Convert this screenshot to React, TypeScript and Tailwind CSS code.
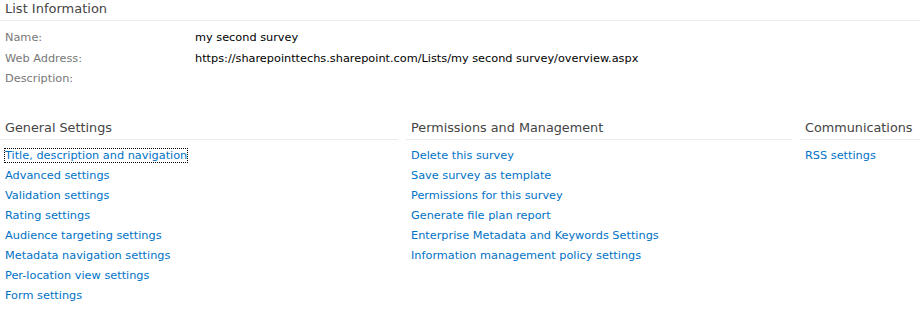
const general = [
  'Title, description and navigation',
  'Advanced settings',
  'Validation settings',
  'Rating settings',
  'Audience targeting settings',
  'Metadata navigation settings',
  'Per-location view settings',
  'Form settings',
];

const permissions = [
  'Delete this survey',
  'Save survey as template',
  'Permissions for this survey',
  'Generate file plan report',
  'Enterprise Metadata and Keywords Settings',
  'Information management policy settings',
];

const communications = ['RSS settings'];

const info = [
  { label: 'Name:', value: 'my second survey' },
  { label: 'Web Address:', value: 'https://sharepointtechs.sharepoint.com/Lists/my second survey/overview.aspx' },
  { label: 'Description:', value: '' },
];

function Section({ title, links, className }: { title: string; links: string[]; className?: string }) {
  return (
    <div className={className}>
      <div className="border-b border-[#ebebeb] px-[5px] pb-[2px] text-[12.8px] leading-[18px] text-[#444]">{title}</div>
      <ul className="pt-[6px]">
        {links.map((l, i) => (
          <li key={l} className="h-[20px] px-[5px] leading-[20px]">
            <a
              href="#"
              className={
                i === 0 && title === 'General Settings'
                  ? 'text-[#0072c6] outline-1 outline-dotted outline-[#000]'
                  : 'text-[#0072c6]'
              }
            >
              {l}
            </a>
          </li>
        ))}
      </ul>
    </div>
  );
}

export default function App() {
  return (
    <div className="h-[326px] w-[920px] overflow-hidden bg-white text-[11.3px] font-['DejaVu_Sans',Verdana,sans-serif]">
      <div className="border-b border-[#ebebeb] px-[5px] pt-px pb-[3px] text-[13px] leading-[16px] text-[#444]">
        List Information
      </div>
      <div className="pt-[7px]">
        {info.map((r) => (
          <div key={r.label} className="flex h-[20.5px] leading-[20px]">
            <div className="w-[195px] pl-[5px] text-[#777]">{r.label}</div>
            <div className="text-[#000]">{r.value}</div>
          </div>
        ))}
      </div>
      <div className="mt-[29px] flex gap-[8px]">
        <Section title="General Settings" links={general} className="w-[398px]" />
        <Section title="Permissions and Management" links={permissions} className="w-[386px]" />
        <Section title="Communications" links={communications} className="flex-1" />
      </div>
    </div>
  );
}
